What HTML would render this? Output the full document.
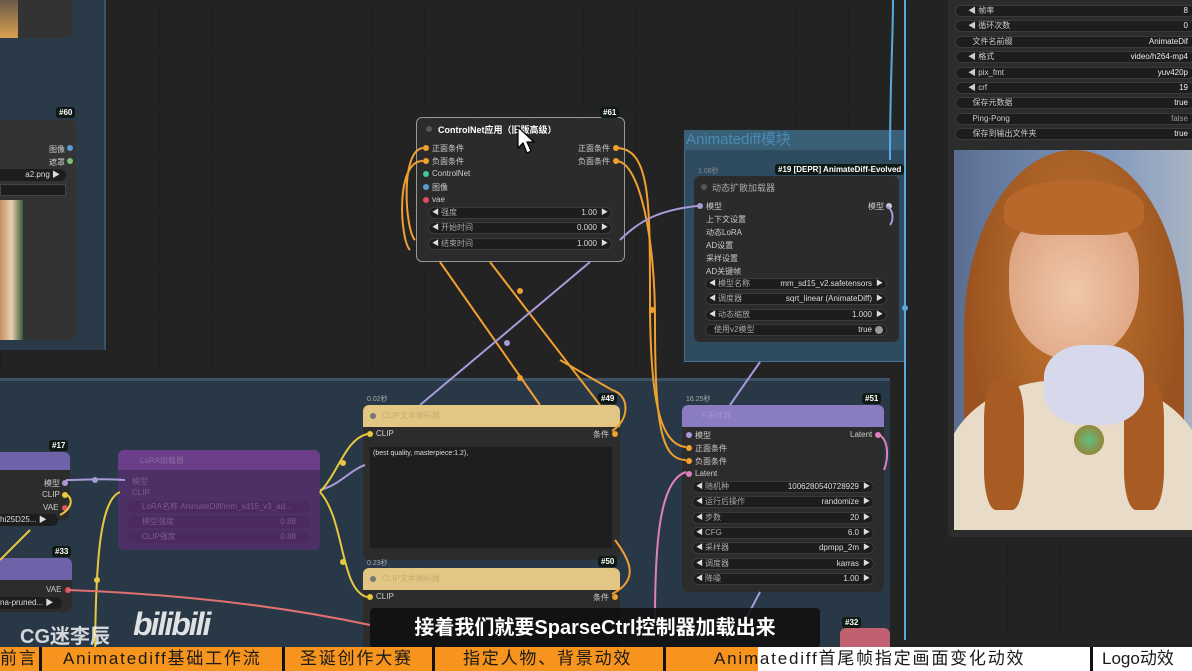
<!DOCTYPE html>
<html><head><meta charset="utf-8"><style>
*{margin:0;padding:0;box-sizing:border-box}
body{width:1192px;height:671px;overflow:hidden;position:relative;background:#212121;font-family:"Liberation Sans","Noto Sans CJK SC",sans-serif;font-size:8px;color:#ccc}
.a{position:absolute}
.grid{background-color:#232323;background-image:linear-gradient(#1f1f1f 1px,transparent 1px),linear-gradient(90deg,#1f1f1f 1px,transparent 1px);background-size:53px 53px}
.node{position:absolute;background:#2c2c2c;border-radius:6px}
.tag{position:absolute;background:#0f1a14;color:#fff;font-size:8px;font-weight:bold;padding:1px 3px;border-radius:3px}
.w{position:absolute;height:12px;border-radius:6px;background:#1d1d1d;border:1px solid #3a3a3a;font-size:8px;color:#ddd;line-height:10px;padding:0 10px}
.w .l{position:absolute;left:12px;color:#aaa}.w .r{position:absolute;right:14px}
.w:before{content:"◀";position:absolute;left:3px;font-size:7px;color:#ddd}
.w:after{content:"▶";position:absolute;right:3px;font-size:7px;color:#ddd}
.lw{position:absolute;left:128px;width:182px;height:12px;border-radius:6px;background:#4a2a60;font-size:8px;color:#7a5a90;line-height:12px;padding-left:14px}
.d{position:absolute;width:6px;height:6px;border-radius:50%}
.t{position:absolute;font-size:8px;color:#ccc;white-space:nowrap}
.rp{position:absolute;left:955px;width:240px;height:12px;border-radius:6px;background:#1d1d1d;border:1px solid #3a3a3a;font-size:8px;color:#ccc;line-height:10px}
.rp .l{position:absolute;left:12px}.rp .r{position:absolute;right:6px;color:#eee}
.bb span{letter-spacing:1.8px}
</style></head><body>
<div class="a grid" style="left:0;top:0;width:1192px;height:671px"></div>
<!-- left group -->
<div class="a" style="left:0;top:0;width:106px;height:350px;background:#2a3a48;border-right:2px solid #3d5468"></div>
<div class="node" style="left:0;top:-6px;width:72px;height:44px;background:#333"></div>
<div class="a" style="left:0;top:0;width:18px;height:38px;background:linear-gradient(#6a5a4a,#d9a050)"></div>
<div class="node" style="left:-6px;top:120px;width:82px;height:220px;background:#333"></div>
<div class="tag" style="left:56px;top:107px">#60</div>
<div class="t" style="left:49px;top:144px">图像</div><div class="d" style="left:67px;top:145px;background:#5a9ad8"></div>
<div class="t" style="left:49px;top:157px">遮罩</div><div class="d" style="left:67px;top:158px;background:#7ac07a"></div>
<div class="a" style="left:0;top:169px;width:66px;height:12px;background:#1d1d1d;border-radius:0 6px 6px 0;font-size:8px;color:#ddd;line-height:12px;text-align:right;padding-right:6px">a2.png ▶</div>
<div class="a" style="left:0;top:184px;width:66px;height:12px;background:#1d1d1d;border:1px solid #444"></div>
<div class="a" style="left:0;top:200px;width:23px;height:140px;background:linear-gradient(90deg,#c89060,#e8d0b0 50%,#3a5a3a)"></div>
<!-- bottom group -->
<div class="a" style="left:0;top:378px;width:890px;height:293px;background:#283846;border-top:3px solid #3d5366"></div>
<!-- animatediff group -->
<div class="a" style="left:684px;top:130px;width:221px;height:232px;background:#2f4b5f;border:1px solid #4a7090"></div>
<div class="a" style="left:684px;top:130px;width:221px;height:20px;background:#3a6078;color:#4a8ab4;font-size:15px;line-height:20px;padding-left:2px">Animatediff模块</div>
<div class="node" style="left:694px;top:176px;width:205px;height:166px;background:#2b2b2b"></div>
<div class="t" style="left:698px;top:166px;color:#888;font-size:7px">1.08秒</div>
<div class="tag" style="left:775px;top:164px">#19 [DEPR] AnimateDiff-Evolved</div>
<div class="d" style="left:701px;top:184px;background:#555"></div><div class="t" style="left:712px;top:181px;font-size:9px;color:#aaa">动态扩散加载器</div>
<div class="d" style="left:697px;top:203px;background:#a89ad8"></div><div class="t" style="left:706px;top:201px">模型</div>
<div class="t" style="left:868px;top:201px">模型</div><div class="d" style="left:886px;top:203px;background:#ccc"></div>
<div class="t" style="left:706px;top:214px">上下文设置</div><div class="t" style="left:706px;top:227px">动态LoRA</div><div class="t" style="left:706px;top:240px">AD设置</div><div class="t" style="left:706px;top:253px">采样设置</div><div class="t" style="left:706px;top:266px">AD关键帧</div>
<div class="w" style="left:705px;top:278px;width:182px"><span class="l">模型名称</span><span class="r">mm_sd15_v2.safetensors</span></div>
<div class="w" style="left:705px;top:293px;width:182px"><span class="l">调度器</span><span class="r">sqrt_linear (AnimateDiff)</span></div>
<div class="w" style="left:705px;top:309px;width:182px"><span class="l">动态缩放</span><span class="r">1.000</span></div>
<div class="a" style="left:705px;top:324px;width:182px;height:12px;border-radius:6px;background:#1d1d1d;border:1px solid #3a3a3a;font-size:8px;line-height:10px;color:#aaa;padding-left:8px">使用v2模型<span style="position:absolute;right:14px;color:#ddd">true</span><span style="position:absolute;right:3px;top:1px;width:8px;height:8px;border-radius:50%;background:#999"></span></div>
<!-- controlnet node -->
<div class="node" style="left:416px;top:117px;width:209px;height:145px;background:#2b2b2b;border:1px solid #999"></div>
<div class="tag" style="left:600px;top:107px">#61</div>
<div class="d" style="left:426px;top:126px;background:#555"></div>
<div class="t" style="left:438px;top:123px;color:#fff;font-size:9px;font-weight:bold">ControlNet应用（旧版高级）</div>
<svg class="a" style="left:517px;top:126px" width="20" height="32"><path d="M1 1 L1 22 L6 17 L10 27 L14 25 L10 16 L17 16 Z" fill="#fff" stroke="#000" stroke-width="1.2"/></svg>
<div class="d" style="left:423px;top:145px;background:#f0a030"></div><div class="t" style="left:432px;top:143px">正面条件</div>
<div class="d" style="left:423px;top:158px;background:#f0a030"></div><div class="t" style="left:432px;top:156px">负面条件</div>
<div class="d" style="left:423px;top:171px;background:#40c8a0"></div><div class="t" style="left:432px;top:169px">ControlNet</div>
<div class="d" style="left:423px;top:184px;background:#5a9ad8"></div><div class="t" style="left:432px;top:182px">图像</div>
<div class="d" style="left:423px;top:197px;background:#e05060"></div><div class="t" style="left:432px;top:195px">vae</div>
<div class="t" style="left:578px;top:143px">正面条件</div><div class="d" style="left:613px;top:145px;background:#f0a030"></div>
<div class="t" style="left:578px;top:156px">负面条件</div><div class="d" style="left:613px;top:158px;background:#f0a030"></div>
<div class="w" style="left:428px;top:207px;width:184px"><span class="l">强度</span><span class="r">1.00</span></div>
<div class="w" style="left:428px;top:222px;width:184px"><span class="l">开始时间</span><span class="r">0.000</span></div>
<div class="w" style="left:428px;top:238px;width:184px"><span class="l">结束时间</span><span class="r">1.000</span></div>
<!-- bottom nodes -->
<div class="node" style="left:-6px;top:452px;width:76px;height:68px;background:#2c2c2c"></div>
<div class="a" style="left:0;top:452px;width:70px;height:18px;background:#6e62a8;border-radius:0 6px 0 0"></div>
<div class="tag" style="left:49px;top:440px">#17</div>
<div class="t" style="left:44px;top:478px">模型</div><div class="d" style="left:62px;top:480px;background:#a89ad8"></div>
<div class="t" style="left:42px;top:490px">CLIP</div><div class="d" style="left:62px;top:492px;background:#e8c840"></div>
<div class="t" style="left:43px;top:503px">VAE</div><div class="d" style="left:62px;top:505px;background:#e05060"></div>
<div class="a" style="left:0;top:514px;width:58px;height:12px;background:#1d1d1d;border-radius:0 6px 6px 0;font-size:8px;line-height:12px;color:#ddd">hi25D25... ▶</div>
<div class="node" style="left:118px;top:450px;width:202px;height:100px;background:#53306c;opacity:.85"></div>
<div class="a" style="left:118px;top:450px;width:202px;height:20px;background:#6a3e88;border-radius:6px 6px 0 0"></div>
<div class="t" style="left:140px;top:455px;color:#8a6aa0">LoRA加载器</div>
<div class="t" style="left:132px;top:476px;color:#7a5a90">模型</div><div class="t" style="left:132px;top:488px;color:#7a5a90">CLIP</div>
<div class="lw" style="top:501px">LoRA名称 AnimateDiff/mm_sd15_v3_ad...</div>
<div class="lw" style="top:516px">模型强度<span style="position:absolute;right:14px">0.88</span></div>
<div class="lw" style="top:531px">CLIP强度<span style="position:absolute;right:14px">0.88</span></div>
<div class="node" style="left:-6px;top:558px;width:78px;height:54px"></div>
<div class="a" style="left:0;top:558px;width:72px;height:22px;background:#6e62a8;border-radius:0 6px 0 0"></div>
<div class="tag" style="left:52px;top:546px">#33</div>
<div class="t" style="left:46px;top:585px">VAE</div><div class="d" style="left:65px;top:587px;background:#e05060"></div>
<div class="a" style="left:0;top:597px;width:62px;height:12px;background:#1d1d1d;border-radius:0 6px 6px 0;font-size:8px;line-height:12px;color:#ddd">na-pruned... ▶</div>
<!-- clip 49 -->
<div class="node" style="left:363px;top:405px;width:257px;height:155px"></div>
<div class="a" style="left:363px;top:405px;width:257px;height:22px;background:#e3c684;border-radius:6px 6px 0 0"></div>
<div class="t" style="left:367px;top:394px;color:#aaa;font-size:7px">0.02秒</div><div class="tag" style="left:598px;top:393px">#49</div>
<div class="t" style="left:382px;top:410px;color:#c9ab70">CLIP文本编码器</div><div class="d" style="left:370px;top:413px;background:#777"></div>
<div class="d" style="left:367px;top:431px;background:#e8c840"></div><div class="t" style="left:376px;top:429px">CLIP</div>
<div class="t" style="left:593px;top:429px">条件</div><div class="d" style="left:612px;top:431px;background:#f0a030"></div>
<div class="a" style="left:370px;top:447px;width:242px;height:101px;background:#1e1e1e;color:#ddd;font-size:7px;padding:3px">(best quality, masterpiece:1.2),</div>
<!-- clip 50 -->
<div class="node" style="left:363px;top:568px;width:257px;height:80px"></div>
<div class="a" style="left:363px;top:568px;width:257px;height:22px;background:#e3c684;border-radius:6px 6px 0 0"></div>
<div class="t" style="left:367px;top:558px;color:#aaa;font-size:7px">0.23秒</div><div class="tag" style="left:598px;top:556px">#50</div>
<div class="t" style="left:382px;top:573px;color:#c9ab70">CLIP文本编码器</div><div class="d" style="left:370px;top:576px;background:#777"></div>
<div class="d" style="left:367px;top:594px;background:#e8c840"></div><div class="t" style="left:376px;top:592px">CLIP</div>
<div class="t" style="left:593px;top:592px">条件</div><div class="d" style="left:612px;top:594px;background:#f0a030"></div>
<!-- ksampler -->
<div class="node" style="left:682px;top:405px;width:202px;height:187px"></div>
<div class="a" style="left:682px;top:405px;width:202px;height:22px;background:#8a7cc0;border-radius:6px 6px 0 0"></div>
<div class="t" style="left:686px;top:394px;color:#aaa;font-size:7px">16.25秒</div><div class="tag" style="left:862px;top:393px">#51</div>
<div class="t" style="left:702px;top:410px;color:#a090d0">K采样器</div>
<div class="d" style="left:686px;top:432px;background:#a89ad8"></div><div class="t" style="left:695px;top:430px">模型</div>
<div class="t" style="left:850px;top:430px">Latent</div><div class="d" style="left:875px;top:432px;background:#e080c0"></div>
<div class="d" style="left:686px;top:445px;background:#f0a030"></div><div class="t" style="left:695px;top:443px">正面条件</div>
<div class="d" style="left:686px;top:458px;background:#f0a030"></div><div class="t" style="left:695px;top:456px">负面条件</div>
<div class="d" style="left:686px;top:471px;background:#e080c0"></div><div class="t" style="left:695px;top:469px">Latent</div>
<div class="w" style="left:692px;top:481px;width:182px"><span class="l">随机种</span><span class="r">1006280540728929</span></div>
<div class="w" style="left:692px;top:496px;width:182px"><span class="l">运行后操作</span><span class="r">randomize</span></div>
<div class="w" style="left:692px;top:512px;width:182px"><span class="l">步数</span><span class="r">20</span></div>
<div class="w" style="left:692px;top:527px;width:182px"><span class="l">CFG</span><span class="r">6.0</span></div>
<div class="w" style="left:692px;top:542px;width:182px"><span class="l">采样器</span><span class="r">dpmpp_2m</span></div>
<div class="w" style="left:692px;top:558px;width:182px"><span class="l">调度器</span><span class="r">karras</span></div>
<div class="w" style="left:692px;top:573px;width:182px"><span class="l">降噪</span><span class="r">1.00</span></div>
<div class="node" style="left:840px;top:628px;width:50px;height:30px;background:#c06070"></div>
<div class="tag" style="left:842px;top:617px">#32</div>
<!-- right panel -->
<div class="a" style="left:948px;top:0;width:244px;height:537px;background:#2c2c2c;border-radius:0 0 0 6px"></div>
<div class="rp" style="top:5px"><span class="l">◀ 帧率</span><span class="r">8</span></div>
<div class="rp" style="top:20px"><span class="l">◀ 循环次数</span><span class="r">0</span></div>
<div class="rp" style="top:36px"><span class="l">&nbsp;&nbsp;文件名前缀</span><span class="r">AnimateDif</span></div>
<div class="rp" style="top:51px"><span class="l">◀ 格式</span><span class="r">video/h264-mp4</span></div>
<div class="rp" style="top:67px"><span class="l">◀ pix_fmt</span><span class="r">yuv420p</span></div>
<div class="rp" style="top:82px"><span class="l">◀ crf</span><span class="r">19</span></div>
<div class="rp" style="top:97px"><span class="l">&nbsp;&nbsp;保存元数据</span><span class="r">true</span></div>
<div class="rp" style="top:113px"><span class="l">&nbsp;&nbsp;Ping-Pong</span><span class="r" style="color:#999">false</span></div>
<div class="rp" style="top:128px"><span class="l">&nbsp;&nbsp;保存到输出文件夹</span><span class="r">true</span></div>
<div class="a" style="left:954px;top:150px;width:238px;height:380px;background:linear-gradient(90deg,#5a6e90,#7d95bd 60%,#a8b4c4);overflow:hidden">
 <div class="a" style="left:10px;top:0;width:220px;height:360px;border-radius:50% 50% 20% 20%;background:radial-gradient(ellipse at 50% 40%,#c77a30,#9a5320 70%)"></div>
 <div class="a" style="left:-10px;top:230px;width:260px;height:200px;border-radius:45% 45% 0 0;background:#e8dcc8"></div>
 <div class="a" style="left:30px;top:230px;width:40px;height:130px;background:#a85c24;border-radius:30%"></div>
 <div class="a" style="left:170px;top:230px;width:40px;height:130px;background:#a85c24;border-radius:30%"></div>
 <div class="a" style="left:55px;top:60px;width:130px;height:150px;border-radius:40% 40% 48% 48%;background:radial-gradient(ellipse at 50% 55%,#f0c8a8,#d89a78)"></div>
 <div class="a" style="left:50px;top:30px;width:140px;height:55px;border-radius:50% 50% 30% 30%;background:#b8682a"></div>
 <div class="a" style="left:90px;top:195px;width:100px;height:80px;border-radius:40%;background:#d8d8ec"></div>
 <div class="a" style="left:120px;top:275px;width:30px;height:30px;border-radius:50%;background:radial-gradient(#60c080,#a87020)"></div>
</div>
<svg class="a" style="left:0;top:0" width="1192" height="671" fill="none" stroke-width="2">
 <path d="M905 0 C905 200 905 300 905 640" stroke="#5aa8e0"/>
 <path d="M893 0 C893 40 890 80 890 160" stroke="#5aa8e0"/>
 <circle cx="905" cy="308" r="3" fill="#5aa8e0"/>
 <path d="M616 148 C650 148 650 200 650 300 C650 400 660 445 686 447" stroke="#f0a030"/>
 <path d="M616 161 C640 161 655 240 655 320 C655 420 660 460 686 460" stroke="#f0a030"/>
 <path d="M423 148 C400 150 405 230 415 240" stroke="#f0a030"/>
 <path d="M423 161 C395 160 400 240 410 250" stroke="#f0a030"/>
 <path d="M440 262 L540 405" stroke="#f0a030"/>
 <path d="M490 262 L600 405" stroke="#f0a030"/>
 <path d="M612 431 C630 420 630 395 612 390 L560 360" stroke="#f0a030"/>
 <path d="M612 594 C640 580 630 560 615 540" stroke="#f0a030"/>
 <circle cx="520" cy="291" r="3" fill="#f0a030"/><circle cx="652" cy="310" r="3" fill="#f0a030"/><circle cx="520" cy="378" r="3" fill="#f0a030"/>
 <path d="M697 206 C660 210 640 220 620 240" stroke="#a89ad8"/>
 <path d="M590 262 L420 405" stroke="#a89ad8"/>
 <circle cx="507" cy="343" r="3" fill="#a89ad8"/>
 <path d="M760 362 L730 405" stroke="#a89ad8"/>
 <path d="M66 480 C90 480 100 478 125 480" stroke="#a89ad8"/>
 <circle cx="95" cy="480" r="3" fill="#a89ad8"/>
 <path d="M320 490 C340 485 350 470 365 465" stroke="#a89ad8"/>
 <path d="M367 434 C345 440 340 470 320 492" stroke="#e8c840"/>
 <path d="M367 597 C340 590 345 520 320 492" stroke="#e8c840"/>
 <circle cx="343" cy="463" r="3" fill="#e8c840"/><circle cx="343" cy="562" r="3" fill="#e8c840"/>
 <path d="M120 492 C100 500 95 560 95 671" stroke="#e8c840"/>
 <circle cx="97" cy="580" r="3" fill="#e8c840"/>
 <path d="M66 494 C75 500 70 510 60 515" stroke="#e8c840"/>
 <path d="M30 530 L0 560" stroke="#e8c840"/>
 <path d="M68 590 C200 595 300 610 370 625" stroke="#e07070"/>
 <path d="M686 472 C660 480 655 540 655 620" stroke="#e080c0"/>
 <path d="M878 434 C890 440 888 460 884 470" stroke="#e080c0"/>
 <path d="M886 206 C895 210 893 222 890 225" stroke="#a89ad8"/>
 <path d="M760 592 L740 630" stroke="#a89ad8"/>
</svg>
<!-- watermark -->
<div class="t" style="left:20px;top:620px;font-size:20px;color:rgba(255,255,255,.8);font-weight:bold">CG迷李辰</div>
<div class="t" style="left:133px;top:606px;font-size:32px;color:rgba(255,255,255,.85);font-weight:bold;font-style:italic;letter-spacing:-2px">bilibili</div>
<!-- subtitle -->
<div class="a" style="left:370px;top:608px;width:450px;height:40px;background:rgba(15,15,15,.88);border-radius:4px;color:#fff;font-size:20px;line-height:40px;text-align:center;font-weight:bold">接着我们就要SparseCtrl控制器加载出来</div>
<!-- bottom bar -->
<div class="a bb" style="left:0;top:647px;width:1192px;height:24px;background:#f7941d;font-size:17px;color:#1a1a1a;line-height:24px;white-space:nowrap;overflow:hidden">
 <span class="a" style="left:0">前言</span><span class="a" style="left:39px;width:3px;height:24px;background:#111"></span>
 <span class="a" style="left:63px">Animatediff基础工作流</span><span class="a" style="left:282px;width:3px;height:24px;background:#111"></span>
 <span class="a" style="left:300px">圣诞创作大赛</span><span class="a" style="left:432px;width:3px;height:24px;background:#111"></span>
 <span class="a" style="left:463px">指定人物、背景动效</span><span class="a" style="left:663px;width:3px;height:24px;background:#111"></span>
 <span class="a" style="left:758px;width:434px;height:24px;background:#fff"></span>
 <span class="a" style="left:714px">Animatediff首尾帧指定画面变化动效</span>
 <span class="a" style="left:1090px;width:3px;height:24px;background:#111"></span>
 <span class="a" style="left:1102px;letter-spacing:0">Logo动效</span>
</div>
</body></html>
